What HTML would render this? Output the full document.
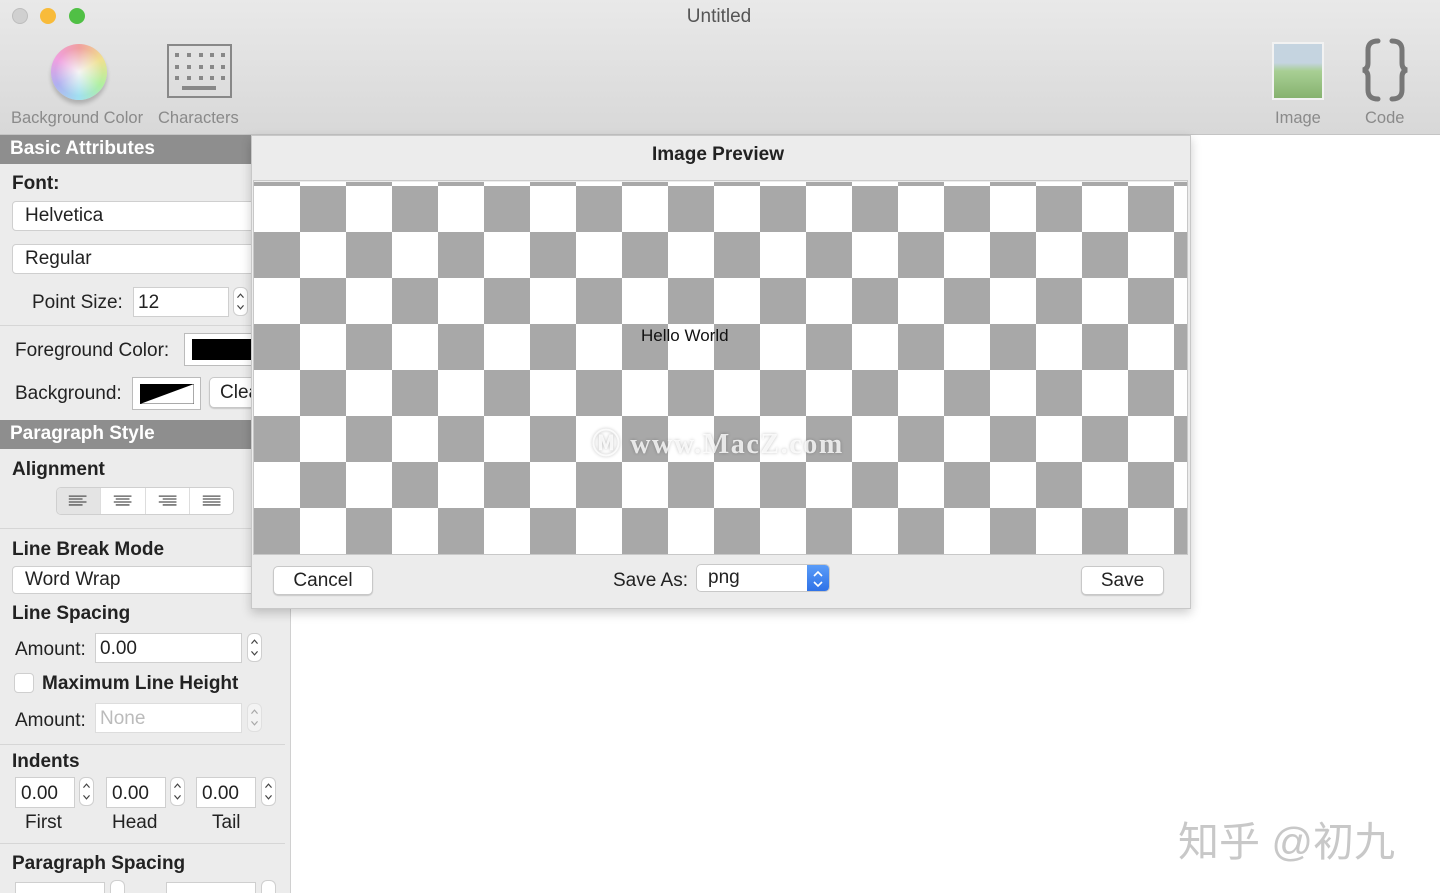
<!DOCTYPE html>
<html><head><meta charset="utf-8"><style>
*{margin:0;padding:0;box-sizing:border-box}
html,body{width:1440px;height:893px;overflow:hidden}
body{position:relative;background:#fff;font-family:"Liberation Sans","Noto Sans CJK SC",sans-serif;color:#222}
.a{position:absolute}
.tb{left:0;top:0;width:1440px;height:135px;background:linear-gradient(#e9e9e9,#d8d8d8);border-bottom:1px solid #c4c4c4}
.lbl{font-size:16.5px;color:#8a8a8a}
.side{left:0;top:135px;width:291px;height:758px;background:#ececec;border-right:1px solid #d0d0d0}
.hd{left:0;width:251px;height:29px;background:#8e8e8e;color:#fff;font-weight:bold;font-size:19px;padding:3px 10px}
.b{font-weight:bold;font-size:19px;color:#222}
.t{font-size:19px;color:#222}
.box{background:#fff;border:1px solid #cfcfcf}
.step{width:15px;height:29px;border:1px solid #cfcfcf;border-radius:6px;background:#fff}
.sep{height:1px;background:#d6d6d6;left:0;width:285px}
.btn{background:#fff;border:1px solid #c8c8c8;border-radius:5px;font-size:19px;text-align:center;box-shadow:0 1px 1px rgba(0,0,0,.15)}
</style></head><body>
<svg width="0" height="0" style="position:absolute"><defs><symbol id="ar" viewBox="0 0 15 29"><path d="M4 10 L7.5 6 L11 10 M4 19 L7.5 23 L11 19" fill="none" stroke="#444" stroke-width="1.4"/></symbol></defs></svg>
<div class="a tb"></div>
<div class="a" style="left:12px;top:8px;width:16px;height:16px;border-radius:50%;background:#d0d0d0;border:1px solid #bdbdbd"></div>
<div class="a" style="left:40px;top:8px;width:16px;height:16px;border-radius:50%;background:#f8bb3a"></div>
<div class="a" style="left:69px;top:8px;width:16px;height:16px;border-radius:50%;background:#50c045"></div>
<div class="a" style="left:0;top:6px;width:1438px;text-align:center;font-size:19px;color:#555">Untitled</div>
<div class="a" style="left:51px;top:44px;width:56px;height:56px;border-radius:50%;background:radial-gradient(circle at 50% 50%,#f4f4f4 0,rgba(255,255,255,0) 60%),conic-gradient(#f0a0a0,#f0e090,#b0f0a0,#a0e0f0,#b0b0f0,#f0a0e0,#f0a0a0);box-shadow:0 4px 4px rgba(0,0,0,.2)"></div>
<div class="a lbl" style="left:11px;top:109px">Background Color</div>
<svg class="a" style="left:167px;top:44px" width="65" height="54"><rect x="1" y="1" width="63" height="52" fill="none" stroke="#888" stroke-width="2"/><g fill="#888"><rect x="8" y="9" width="4" height="4"/><rect x="20" y="9" width="4" height="4"/><rect x="32" y="9" width="4" height="4"/><rect x="43" y="9" width="4" height="4"/><rect x="54" y="9" width="4" height="4"/><rect x="8" y="21" width="4" height="4"/><rect x="20" y="21" width="4" height="4"/><rect x="32" y="21" width="4" height="4"/><rect x="43" y="21" width="4" height="4"/><rect x="54" y="21" width="4" height="4"/><rect x="8" y="32" width="4" height="4"/><rect x="20" y="32" width="4" height="4"/><rect x="32" y="32" width="4" height="4"/><rect x="43" y="32" width="4" height="4"/><rect x="54" y="32" width="4" height="4"/><rect x="15" y="42" width="34" height="4"/></g></svg>
<div class="a lbl" style="left:158px;top:109px">Characters</div>
<div class="a" style="left:1272px;top:42px;width:52px;height:58px;background:linear-gradient(#c5d4e0 0,#c5d4e0 35%,#a8cf94 50%,#86b26f 100%);border:2px solid #f2f2f2"></div>
<div class="a lbl" style="left:1275px;top:109px">Image</div>
<svg class="a" style="left:1360px;top:38px" width="50" height="64"><g fill="none" stroke="#777" stroke-width="5" stroke-linecap="round"><path d="M18 3 Q8 3 8 12 L8 25 Q8 31 3 32 Q8 33 8 39 L8 52 Q8 61 18 61"/><path d="M32 3 Q42 3 42 12 L42 25 Q42 31 47 32 Q42 33 42 39 L42 52 Q42 61 32 61"/></g></svg>
<div class="a lbl" style="left:1365px;top:109px">Code</div>

<div class="a side"></div>
<div class="a hd" style="top:135px">Basic Attributes</div>
<div class="a b" style="left:12px;top:173px">Font:</div>
<div class="a box t" style="left:12px;top:201px;width:245px;height:30px;padding:3px 12px;border-radius:4px">Helvetica</div>
<div class="a box t" style="left:12px;top:244px;width:245px;height:30px;padding:3px 12px;border-radius:4px">Regular</div>
<div class="a t" style="left:32px;top:292px">Point Size:</div>
<div class="a box t" style="left:133px;top:287px;width:96px;height:30px;padding:4px 4px">12</div>
<svg class="a step" style="left:233px;top:287px"><use href="#ar"/></svg>
<div class="a sep" style="top:325px"></div>
<div class="a t" style="left:15px;top:340px">Foreground Color:</div>
<div class="a box" style="left:184px;top:333px;width:80px;height:33px;border-color:#bbb;padding:5px 7px"><div style="background:#000;height:100%"></div></div>
<div class="a t" style="left:15px;top:383px">Background:</div>
<div class="a box" style="left:132px;top:377px;width:69px;height:33px;border-color:#bbb;padding:6px 7px"><svg width="54" height="20"><rect x="0" y="0" width="54" height="20" fill="#fff" stroke="#555"/><polygon points="0,0 54,0 0,20" fill="#000"/></svg></div>
<div class="a btn" style="left:209px;top:377px;width:60px;height:31px;text-align:left;padding:4px 10px">Clear</div>
<div class="a hd" style="top:420px">Paragraph Style</div>
<div class="a b" style="left:12px;top:459px">Alignment</div>
<div class="a" style="left:56px;top:487px;width:178px;height:28px;border:1px solid #cfcfcf;border-radius:5px;background:#fff;overflow:hidden;display:flex">
<svg style="flex:1;background:#e4e4e4;border-right:1px solid #ddd" viewBox="0 0 44 26"><g stroke="#555" stroke-width="1.3"><path d="M12 8h18M12 11h14M12 14h18M12 17h14"/></g></svg>
<svg style="flex:1;border-right:1px solid #ddd" viewBox="0 0 44 26"><g stroke="#555" stroke-width="1.3"><path d="M13 8h18M15 11h14M13 14h18M15 17h14"/></g></svg>
<svg style="flex:1;border-right:1px solid #ddd" viewBox="0 0 44 26"><g stroke="#555" stroke-width="1.3"><path d="M13 8h18M17 11h14M13 14h18M17 17h14"/></g></svg>
<svg style="flex:1" viewBox="0 0 44 26"><g stroke="#555" stroke-width="1.3"><path d="M13 8h18M13 11h18M13 14h18M13 17h18"/></g></svg></div>
<div class="a sep" style="top:528px"></div>
<div class="a b" style="left:12px;top:539px">Line Break Mode</div>
<div class="a box t" style="left:12px;top:566px;width:245px;height:28px;padding:2px 12px;border-radius:4px">Word Wrap</div>
<div class="a b" style="left:12px;top:603px">Line Spacing</div>
<div class="a t" style="left:15px;top:639px">Amount:</div>
<div class="a box t" style="left:95px;top:633px;width:147px;height:30px;padding:4px 4px">0.00</div>
<svg class="a step" style="left:247px;top:633px"><use href="#ar"/></svg>
<div class="a box" style="left:14px;top:673px;width:20px;height:20px;border-radius:4px"></div>
<div class="a b" style="left:42px;top:673px">Maximum Line Height</div>
<div class="a t" style="left:15px;top:710px">Amount:</div>
<div class="a box t" style="left:95px;top:703px;width:147px;height:30px;padding:4px 4px;color:#bbb;border-color:#ddd">None</div>
<svg class="a step" style="left:247px;top:703px;opacity:.4"><use href="#ar"/></svg>
<div class="a sep" style="top:744px"></div>
<div class="a b" style="left:12px;top:751px">Indents</div>
<div class="a box t" style="left:15px;top:777px;width:60px;height:31px;padding:5px 5px">0.00</div>
<svg class="a step" style="left:79px;top:777px"><use href="#ar"/></svg>
<div class="a box t" style="left:106px;top:777px;width:60px;height:31px;padding:5px 5px">0.00</div>
<svg class="a step" style="left:170px;top:777px"><use href="#ar"/></svg>
<div class="a box t" style="left:196px;top:777px;width:60px;height:31px;padding:5px 5px">0.00</div>
<svg class="a step" style="left:261px;top:777px"><use href="#ar"/></svg>
<div class="a t" style="left:25px;top:812px">First</div>
<div class="a t" style="left:112px;top:812px">Head</div>
<div class="a t" style="left:212px;top:812px">Tail</div>
<div class="a sep" style="top:843px"></div>
<div class="a b" style="left:12px;top:853px">Paragraph Spacing</div>
<div class="a box" style="left:15px;top:882px;width:90px;height:11px;border-bottom:none"></div>
<div class="a step" style="left:110px;top:880px;height:13px;border-bottom:none;border-radius:6px 6px 0 0"></div>
<div class="a box" style="left:166px;top:882px;width:90px;height:11px;border-bottom:none"></div>
<div class="a step" style="left:261px;top:880px;height:13px;border-bottom:none;border-radius:6px 6px 0 0"></div>

<div class="a" style="left:251px;top:135px;width:940px;height:474px;background:#ececec;border:1px solid #c8c8c8;box-shadow:0 4px 10px rgba(0,0,0,.2)"></div>
<div class="a" style="left:251px;top:144px;width:934px;text-align:center;font-weight:bold;font-size:19px;color:#222">Image Preview</div>
<div class="a" style="left:253px;top:180px;width:935px;height:375px;border:1px solid #c8c8c8;background-color:#fff;background-image:conic-gradient(#a8a8a8 0 25%,#fff 0 50%,#a8a8a8 0 75%,#fff 0);background-size:92px 92px;background-position:0 5px"></div>
<div class="a" style="left:254px;top:181px;width:933px;height:1px;background:#ececec"></div>
<div class="a" style="left:641px;top:326px;font-size:17px;color:#111">Hello World</div>
<div class="a" style="left:592px;top:428px;font-family:'Liberation Serif',serif;font-size:28px;font-weight:bold;color:rgba(255,255,255,.8);text-shadow:0 0 3px rgba(0,0,0,.25);letter-spacing:1.6px;line-height:34px">Ⓜ www.MacZ.com</div>
<div class="a btn" style="left:273px;top:566px;width:100px;height:29px;padding:3px">Cancel</div>
<div class="a t" style="left:613px;top:570px">Save As:</div>
<div class="a" style="left:696px;top:564px;width:134px;height:28px;background:#fff;border:1px solid #c8c8c8;border-radius:5px;font-size:19px;padding:2px 11px;overflow:hidden">png<svg class="a" style="right:0;top:0;background:linear-gradient(#5a9cf8,#2c6fe6)" width="22" height="28"><path d="M7 11 L11 7 L15 11 M7 17 L11 21 L15 17" fill="none" stroke="#fff" stroke-width="1.6"/></svg></div>
<div class="a btn" style="left:1081px;top:566px;width:83px;height:29px;padding:3px">Save</div>
<div class="a" style="left:1178px;top:808px;font-size:41px;color:#c8c8c8;font-family:'Liberation Sans','Noto Sans CJK SC',sans-serif">知乎 @初九</div>
</body></html>
